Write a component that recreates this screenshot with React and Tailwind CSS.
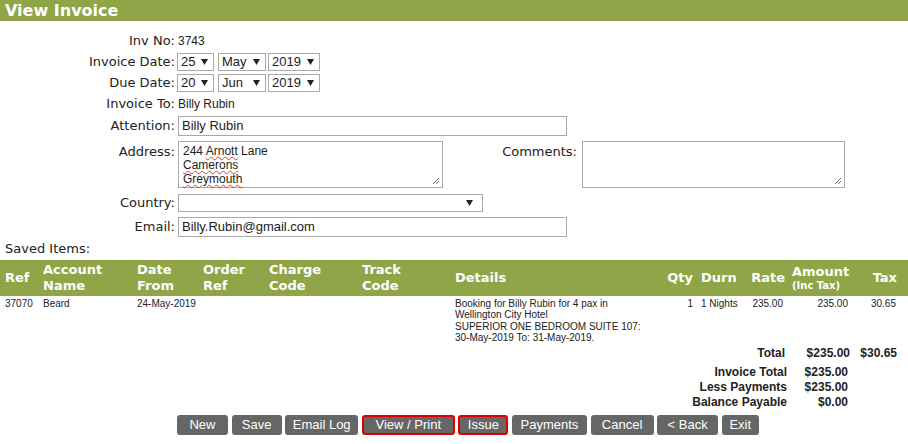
import React from 'react'

const label = "text-[13px] text-[#222] [font-family:'DejaVu_Sans',Verdana,sans-serif]"
const arial = "[font-family:'Liberation_Sans',Arial,sans-serif]"

function Arrow() {
  return (
    <svg width="7" height="6" viewBox="0 0 7 6" className="shrink-0">
      <polygon points="0,0 7,0 3.5,6" fill="#222" />
    </svg>
  )
}

// fake select box, native ones render differently headless
function Sel({ value, className = '' }) {
  return (
    <div className={`flex h-[18px] items-center justify-between border border-[#a9a9a9] bg-white pl-[3px] pr-[5px] text-[13px] text-[#222] ${arial} ${className}`}>
      <span>{value}</span>
      <Arrow />
    </div>
  )
}

function Grip() {
  return (
    <svg width="8" height="8" viewBox="0 0 8 8" className="absolute bottom-[2px] right-[2px]">
      <line x1="7" y1="1" x2="1" y2="7" stroke="#777" strokeWidth="1" />
      <line x1="7" y1="4" x2="4" y2="7" stroke="#777" strokeWidth="1" />
    </svg>
  )
}

function Row({ name, children, className = 'h-[21px] items-center' }) {
  return (
    <div className={`flex ${className}`}>
      <div className={`w-[175px] shrink-0 text-right ${label}`}>{name}</div>
      <div className="ml-[2px] flex items-center">{children}</div>
    </div>
  )
}

const th = "px-[3px] text-left align-middle text-[13px] font-bold leading-[16px] text-white [font-family:'DejaVu_Sans',Verdana,sans-serif]"
const td = 'px-[3px] align-top text-[10px] leading-[11.4px] text-[#222]'

const buttons = [
  { t: 'New', w: 'w-[51px]' },
  { t: 'Save', w: 'w-[50px]' },
  { t: 'Email Log', w: 'w-[73px]' },
  { t: 'View / Print', w: 'w-[93px]', hot: true },
  { t: 'Issue', w: 'w-[50px]', hot: true },
  { t: 'Payments', w: 'w-[75px]' },
  { t: 'Cancel', w: 'w-[63px]' },
  { t: '< Back', w: 'w-[61px]' },
  { t: 'Exit', w: 'w-[37px]' },
]

const squiggle = 'underline decoration-wavy decoration-[#e33] decoration-1 underline-offset-[1px]'

function DateSels({ d, m }) {
  return (
    <>
      <Sel value={d} className="w-[37px]" />
      <Sel value={m} className="ml-[4px] w-[48px]" />
      <Sel value="2019" className="ml-[2px] w-[52px]" />
    </>
  )
}

export default function App() {
  return (
    <div className={`h-[444px] w-[908px] overflow-hidden bg-white ${arial}`}>
      <div className="flex h-[21px] items-center bg-[#8fa548] pl-[5px] text-[16px] font-bold text-white [font-family:'DejaVu_Sans',Verdana,sans-serif]">
        View Invoice
      </div>

      <div className="pt-[10px]">
        <Row name="Inv No:" className="h-[20px] items-center">
          <span className="ml-[1px] text-[12px] text-[#222]">3743</span>
        </Row>
        <Row name="Invoice Date:">
          <DateSels d="25" m="May" />
        </Row>
        <Row name="Due Date:">
          <DateSels d="20" m="Jun" />
        </Row>
        <Row name="Invoice To:">
          <span className="ml-[1px] text-[12px] text-[#222]">Billy Rubin</span>
        </Row>
        <Row name="Attention:" className="h-[24px] items-center">
          <div className="ml-[1px] flex h-[20px] w-[389px] items-center border border-[#a9a9a9] px-[3px] text-[13px] text-[#222]">Billy Rubin</div>
        </Row>

        <div className="flex h-[53px] pt-[3px]">
          <div className={`w-[175px] shrink-0 pt-[1px] text-right ${label}`}>Address:</div>
          <div className="relative ml-[3px] h-[47px] w-[265px] border border-[#a9a9a9] px-[4px] pt-[2px] text-[12px] leading-[14px] text-[#222]">
            <div>244 <span className={squiggle}>Arnott</span> Lane</div>
            <div><span className={squiggle}>Camerons</span></div>
            <div><span className={squiggle}>Greymouth</span></div>
            <Grip />
          </div>
          <div className={`w-[134px] shrink-0 pt-[1px] text-right ${label}`}>Comments:</div>
          <div className="relative ml-[5px] h-[47px] w-[263px] border border-[#a9a9a9]">
            <Grip />
          </div>
        </div>

        <Row name="Country:" className="h-[24px] items-center">
          <Sel value="" className="ml-[1px] w-[305px] pr-[9px]" />
        </Row>
        <Row name="Email:" className="h-[24px] items-center">
          <div className="ml-[1px] flex h-[20px] w-[389px] items-center border border-[#a9a9a9] px-[3px] text-[13px] text-[#222]">Billy.Rubin@gmail.com</div>
        </Row>

        <div className={`mt-[1px] h-[18px] pl-[5px] leading-[18px] ${label}`}>Saved Items:</div>
      </div>

      <table className={`mt-[2px] w-[908px] table-fixed border-collapse ${arial}`}>
        <colgroup>
          <col className="w-[40px]" />
          <col className="w-[94px]" />
          <col className="w-[66px]" />
          <col className="w-[66px]" />
          <col className="w-[93px]" />
          <col className="w-[93px]" />
          <col className="w-[212px]" />
          <col className="w-[33px]" />
          <col className="w-[50px]" />
          <col className="w-[42px]" />
          <col className="w-[64px]" />
          <col className="w-[55px]" />
        </colgroup>
        <thead>
          <tr className="h-[36px] bg-[#8fa548]">
            <th className={`${th} pl-[5px]`}>Ref</th>
            <th className={th}>Account<br />Name</th>
            <th className={th}>Date<br />From</th>
            <th className={th}>Order<br />Ref</th>
            <th className={th}>Charge<br />Code</th>
            <th className={th}>Track<br />Code</th>
            <th className={th}>Details</th>
            <th className={`${th} pr-[4px] text-right`}>Qty</th>
            <th className={`${th} pl-[4px]`}>Durn</th>
            <th className={`${th} pr-[4px] text-right`}>Rate</th>
            <th className={`${th} text-center`}>
              Amount<br />
              <span className="block text-[10px] leading-[12px]">(Inc Tax)</span>
            </th>
            <th className={`${th} pr-[11px] text-right`}>Tax</th>
          </tr>
        </thead>
        <tbody>
          <tr className="h-[48px]">
            <td className={`${td} pl-[5px] pt-[2px]`}>37070</td>
            <td className={`${td} pt-[2px]`}>Beard</td>
            <td className={`${td} pt-[2px]`}>24-May-2019</td>
            <td className={td}></td>
            <td className={td}></td>
            <td className={td}></td>
            <td className={`${td} pt-[2px]`}>
              Booking for Billy Rubin for 4 pax in<br />
              Wellington City Hotel<br />
              SUPERIOR ONE BEDROOM SUITE 107:<br />
              30-May-2019 To: 31-May-2019.
            </td>
            <td className={`${td} pr-[4px] pt-[2px] text-right`}>1</td>
            <td className={`${td} pl-[4px] pt-[2px]`}>1 Nights</td>
            <td className={`${td} pr-[6px] pt-[2px] text-right`}>235.00</td>
            <td className={`${td} pr-[5px] pt-[2px] text-right`}>235.00</td>
            <td className={`${td} pr-[12px] pt-[2px] text-right`}>30.65</td>
          </tr>
          <tr className="h-[18px] text-[12px] font-bold text-[#222]">
            <td colSpan={9}></td>
            <td className="pr-[4px] text-right align-middle">Total</td>
            <td className="pr-[3px] text-right align-middle">$235.00</td>
            <td className="pr-[11px] text-right align-middle">$30.65</td>
          </tr>
        </tbody>
      </table>

      <div className="mt-[3px] grid grid-cols-[787px_61px] text-[12px] font-bold leading-[15px] text-[#222]">
        <div className="text-right">Invoice Total</div>
        <div className="text-right">$235.00</div>
        <div className="text-right">Less Payments</div>
        <div className="text-right">$235.00</div>
        <div className="text-right">Balance Payable</div>
        <div className="text-right">$0.00</div>
      </div>

      <div className="mt-[5px] flex gap-[3.6px] pl-[177px]">
        {buttons.map((b) => (
          <div
            key={b.t}
            className={`flex h-[20px] items-center justify-center rounded-[3px] bg-[#666] text-[13px] text-white ${b.w} ${b.hot ? 'border-2 border-[#e00000] rounded-[1px]' : ''}`}
          >
            {b.t}
          </div>
        ))}
      </div>
    </div>
  )
}
